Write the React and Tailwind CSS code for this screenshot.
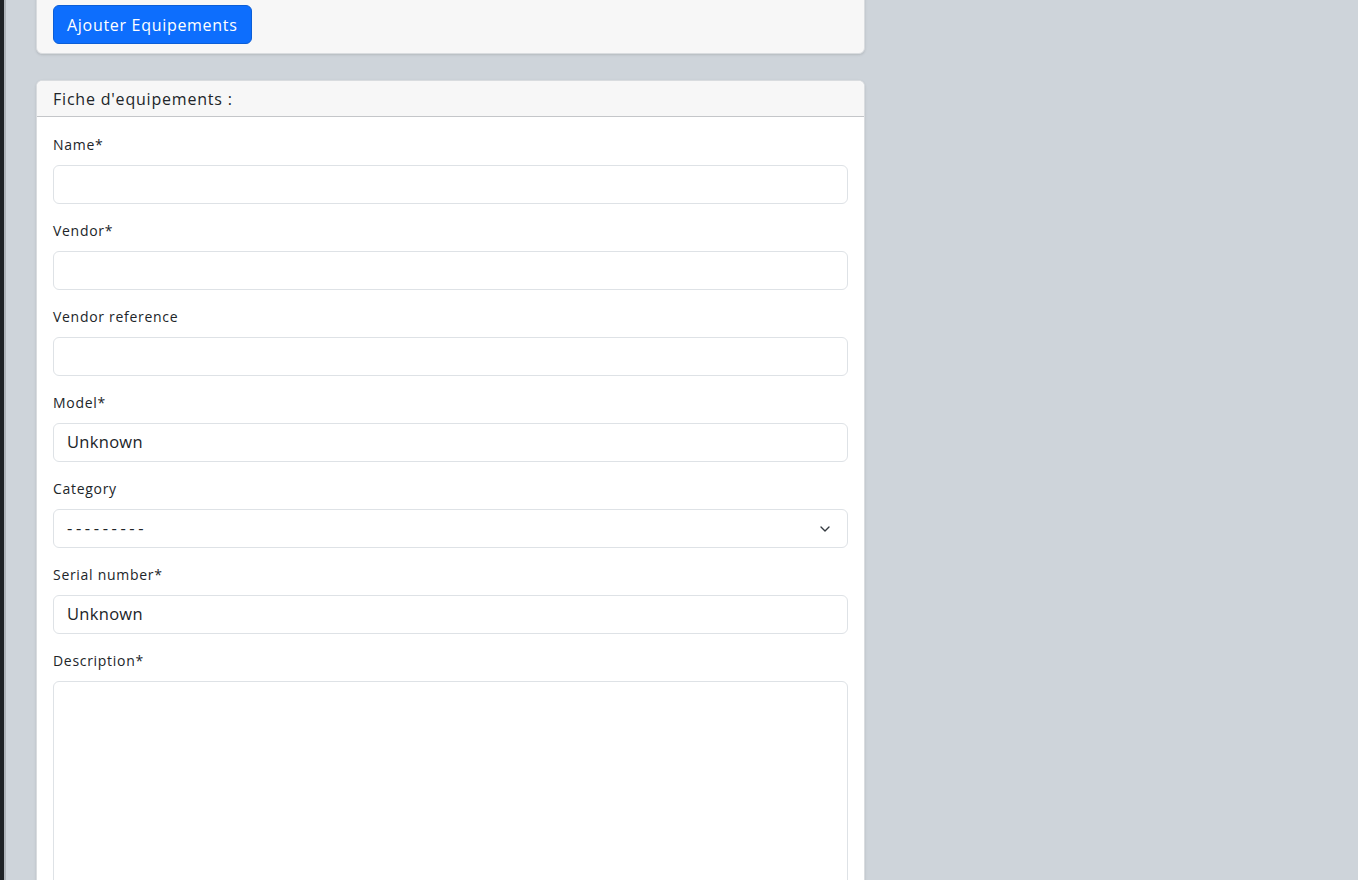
import { ChevronDown } from "lucide-react";

const fields = [
  { label: "Name*", value: "" },
  { label: "Vendor*", value: "" },
  { label: "Vendor reference", value: "" },
  { label: "Model*", value: "Unknown" },
  { label: "Category", value: "---------", select: true },
  { label: "Serial number*", value: "Unknown" },
];

function Field({ label, value, select }) {
  return (
    <div className="mb-4">
      <label className="block text-[14px] leading-[21px] mb-[10px] tracking-[0.7px] text-[#212529]">{label}</label>
      <div className="h-[39px] border border-[#dee2e6] rounded-[6px] bg-white flex items-center justify-between px-[13px]">
        <span className={select ? "text-[16.5px] tracking-[3.6px] text-[#212529]" : "text-[16.5px] tracking-[0.3px] text-[#212529]"}>{value}</span>
        {select && <ChevronDown size={16} strokeWidth={2} className="text-[#343a40] mr-[1px]" />}
      </div>
    </div>
  );
}

export default function App() {
  return (
    <div
      className="h-[880px] overflow-hidden bg-[#ced4da] flex"
      style={{ fontFamily: '"Open Sans", "Liberation Sans", sans-serif' }}
    >
      <div className="w-[4px] bg-[#1f2226] shrink-0" />
      <div className="w-[2px] bg-[#aeb3b9] shrink-0" />
      <div className="pl-[30px] w-[865px] -mt-[12px]">
        {/* Top card */}
        <div className="bg-[#f7f7f7] border border-[#d9dcdf] rounded-[6px] shadow-sm px-4 pt-4 pb-[9px] w-[829px]">
          <button className="bg-[#0d6efd] text-white text-[16px] tracking-[0.7px] h-[39px] px-[13px] rounded-[6px] border border-[#0b5ed7]">
            Ajouter Equipements
          </button>
        </div>

        {/* Equipment form card */}
        <div className="mt-[26px] w-[829px] bg-white border border-[#d9dcdf] rounded-[6px] shadow-sm">
          <div className="bg-[#f7f7f7] h-[36px] border-b border-[#c4c6c9] rounded-t-[6px] px-4 flex items-center text-[16px] tracking-[0.8px] text-[#212529]">
            Fiche d'equipements :
          </div>
          <div className="px-4 pt-[17px]">
            {fields.map((f) => (
              <Field key={f.label} {...f} />
            ))}
            <label className="block text-[14px] leading-[21px] mb-[10px] tracking-[0.7px] text-[#212529]">Description*</label>
            <div className="h-[300px] border border-[#dee2e6] rounded-[6px] bg-white" />
          </div>
        </div>
      </div>
    </div>
  );
}
